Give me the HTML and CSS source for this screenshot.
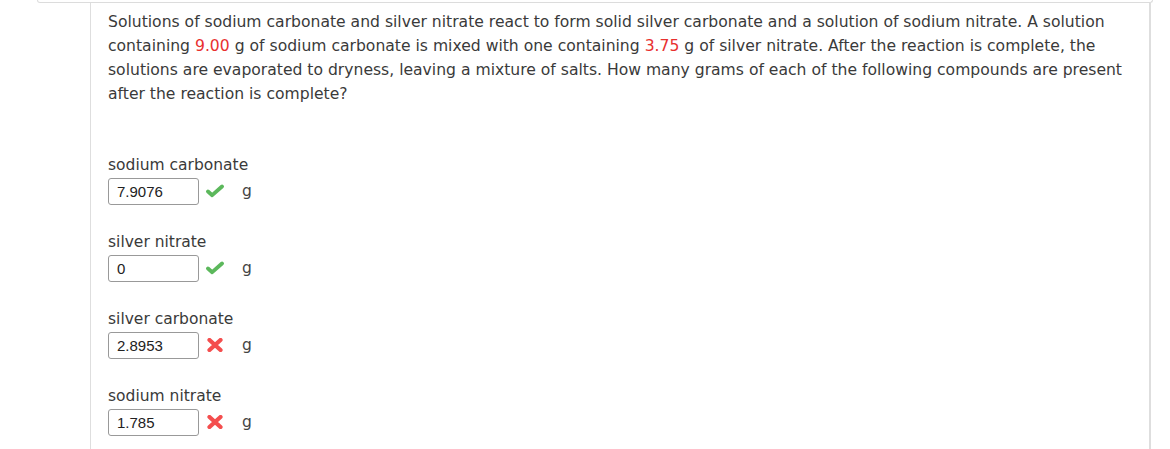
FILE: index.html
```html
<!DOCTYPE html>
<html>
<head>
<meta charset="utf-8">
<link rel="stylesheet" href="styles.css">
</head>
<body>
<div class="topbox"></div>
<div class="panel">
  <p class="question">Solutions of sodium carbonate and silver nitrate react to form solid silver carbonate and a solution of sodium nitrate. A solution containing <span class="num">9.00</span> g of sodium carbonate is mixed with one containing <span class="num">3.75</span> g of silver nitrate. After the reaction is complete, the solutions are evaporated to dryness, leaving a mixture of salts. How many grams of each of the following compounds are present after the reaction is complete?</p>

  <div class="item">
    <div class="label">sodium carbonate</div>
    <div class="row">
      <div class="field">7.9076</div>
      <svg class="mark" width="18" height="14" viewBox="0 0 18 14"><path d="M2 7.5 L6.2 11.2 L16 2.5" fill="none" stroke="#5cb85c" stroke-width="3.8" stroke-linecap="round" stroke-linejoin="round"/></svg>
      <span class="unit">g</span>
    </div>
  </div>

  <div class="item">
    <div class="label">silver nitrate</div>
    <div class="row">
      <div class="field">0</div>
      <svg class="mark" width="18" height="14" viewBox="0 0 18 14"><path d="M2 7.5 L6.2 11.2 L16 2.5" fill="none" stroke="#5cb85c" stroke-width="3.8" stroke-linecap="round" stroke-linejoin="round"/></svg>
      <span class="unit">g</span>
    </div>
  </div>

  <div class="item">
    <div class="label">silver carbonate</div>
    <div class="row">
      <div class="field">2.8953</div>
      <svg class="mark" width="18" height="14" viewBox="0 0 18 14"><path d="M3.5 2 L14.5 12 M14.5 2 L3.5 12" fill="none" stroke="#f44e4e" stroke-width="4.2" stroke-linecap="round"/></svg>
      <span class="unit">g</span>
    </div>
  </div>

  <div class="item">
    <div class="label">sodium nitrate</div>
    <div class="row">
      <div class="field">1.785</div>
      <svg class="mark" width="18" height="14" viewBox="0 0 18 14"><path d="M3.5 2 L14.5 12 M14.5 2 L3.5 12" fill="none" stroke="#f44e4e" stroke-width="4.2" stroke-linecap="round"/></svg>
      <span class="unit">g</span>
    </div>
  </div>
</div>
</body>
</html>
```

FILE: styles.css
```css
html, body {
  margin: 0;
  padding: 0;
  background: #fff;
}
body {
  width: 1170px;
  height: 449px;
  overflow: hidden;
  font-family: "DejaVu Sans", Verdana, sans-serif;
  color: #3a3a3a;
}
.topbox {
  margin-left: 37px;
  width: 1114px;
  height: 3px;
  border: 1px solid #dcdcdc;
  border-top: none;
  border-radius: 0 0 3px 3px;
  margin-top: -1px;
}
.panel {
  margin-left: 90px;
  width: 1061px;
  height: 460px;
  border-left: 1px solid #dedede;
  border-right: 2px solid #dedede;
  padding: 7px 0 0 17px;
  box-sizing: border-box;
}
.question {
  margin: 0;
  font-size: 15.6px;
  line-height: 24px;
  width: 1030px;
}
.num {
  color: #e8302f;
}
.item {
  margin-top: 25px;
}
.question + .item {
  margin-top: 48px;
}
.label {
  font-size: 15.5px;
  line-height: 22px;
}
.row {
  display: flex;
  align-items: center;
  height: 30px;
}
.field {
  width: 91px;
  height: 27px;
  box-sizing: border-box;
  border: 1px solid #999;
  border-radius: 3px;
  padding: 0 8px;
  font-family: "Liberation Sans", Arial, sans-serif;
  font-size: 15px;
  line-height: 25px;
  color: #222;
}
.mark {
  margin-left: 7px;
}
.unit {
  margin-left: 18px;
  font-size: 15.5px;
  color: #444;
}
```
